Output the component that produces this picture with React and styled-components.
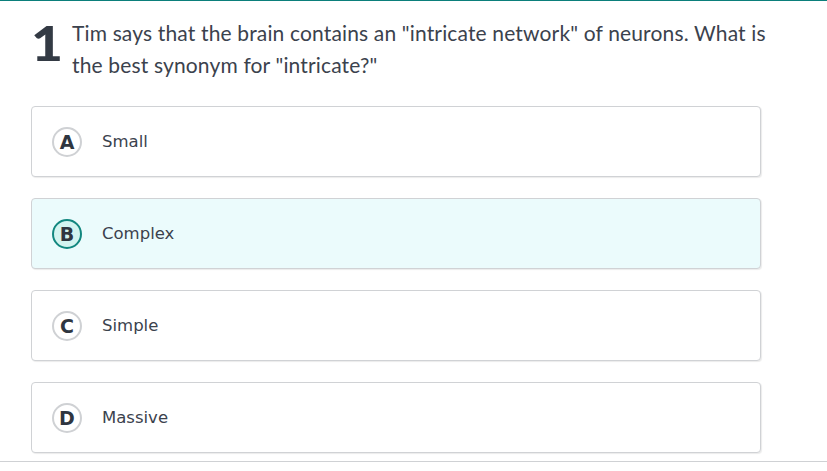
import styled, { createGlobalStyle } from "styled-components";

const GlobalStyle = createGlobalStyle`
  html, body {
    margin: 0;
    padding: 0;
    background: #fff;
  }
`;

const options = [
  { key: "A", label: "Small" },
  { key: "B", label: "Complex", selected: true },
  { key: "C", label: "Simple" },
  { key: "D", label: "Massive" },
];

export default function App() {
  return (
    <>
      <GlobalStyle />
      <Page>
        <Question>
          <Number>1</Number>
          <Prompt>
            Tim says that the brain contains an "intricate network" of neurons.
            What is the best synonym for "intricate?"
          </Prompt>
        </Question>
        <Choices>
          {options.map((o) => (
            <Choice key={o.key} $selected={o.selected}>
              <Badge $selected={o.selected}>{o.key}</Badge>
              <Label>{o.label}</Label>
            </Choice>
          ))}
        </Choices>
      </Page>
    </>
  );
}

const Page = styled.div`
  width: 827px;
  height: 462px;
  box-sizing: border-box;
  border-top: 1px solid #0b7f7b;
  border-bottom: 1px solid #cfd1d4;
  padding: 16px 0 0 31px;
`;

const Question = styled.div`
  display: flex;
  align-items: flex-start;
  gap: 23px;
`;

const Number = styled.div`
  font-family: "Lato", sans-serif;
  font-weight: 900;
  font-size: 48px;
  line-height: 46px;
  color: #333a44;
  width: 18px;
  flex-shrink: 0;
  margin-top: 3px;
  transform: scaleX(1.15);
  transform-origin: left;
`;

const Prompt = styled.p`
  margin: 0;
  font-family: "Lato", sans-serif;
  font-size: 21px;
  letter-spacing: 0.15px;
  line-height: 32px;
  color: #3b424d;
  width: 705px;
  flex-shrink: 0;
`;

const Choices = styled.div`
  display: flex;
  flex-direction: column;
  gap: 21px;
  margin-top: 25px;
  width: 730px;
`;

const Choice = styled.div`
  display: flex;
  align-items: center;
  height: 71px;
  box-sizing: border-box;
  padding-left: 20px;
  border: 1px solid #d0d2d5;
  border-radius: 4px;
  background: ${(p) => (p.$selected ? "#ebfbfc" : "#fff")};
  box-shadow: 1px 1px 1px rgba(0, 0, 0, 0.08);
`;

const Badge = styled.div`
  width: 30px;
  height: 30px;
  box-sizing: border-box;
  border-radius: 50%;
  border: 2px solid ${(p) => (p.$selected ? "#12877f" : "#cfd1d4")};
  background: ${(p) => (p.$selected ? "#d3f4f0" : "#fff")};
  display: flex;
  align-items: center;
  justify-content: center;
  font-family: "DejaVu Sans", sans-serif;
  font-weight: 700;
  font-size: 19px;
  color: #2f3640;
  flex-shrink: 0;
`;

const Label = styled.span`
  margin-left: 20px;
  font-family: "DejaVu Sans", sans-serif;
  font-size: 16.5px;
  color: #3b424d;
`;
